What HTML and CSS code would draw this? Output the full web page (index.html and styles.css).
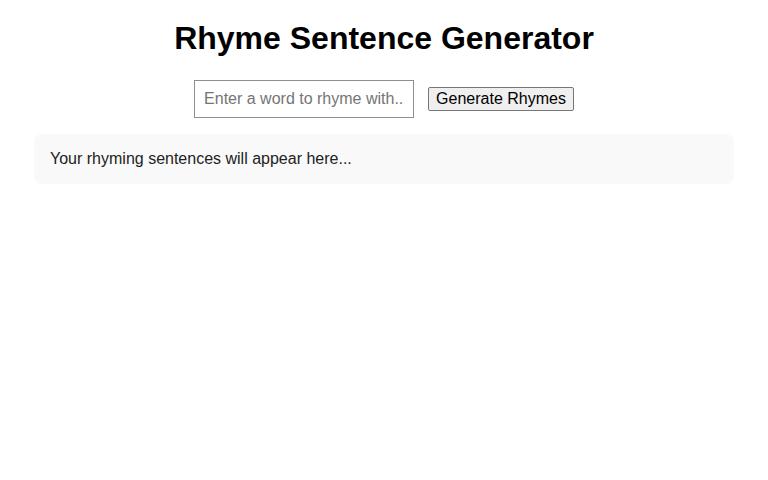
FILE: index.html
```html
<!DOCTYPE html>
<html lang="en">
<head>
    <meta charset="UTF-8">
    <meta name="viewport" content="width=device-width, initial-scale=1.0">
    <title>Rhyme Sentence Generator</title>
    <link rel="stylesheet" href="styles.css">
</head>
<body>
    <div class="container">
        <h1>Rhyme Sentence Generator</h1>

        <div class="controls">
            <input type="text" id="word" placeholder="Enter a word to rhyme with...">
            <button id="generateBtn">Generate Rhymes</button>
        </div>

        <div id="output" class="output">Your rhyming sentences will appear here...</div>
    </div>
</body>
</html>
```

FILE: styles.css
```css
body {
    font-family: 'Liberation Sans', Arial, sans-serif;
    background-color: #fff;
    color: #000;
    margin: 0;
    padding: 0;
}

.container {
    max-width: 700px;
    margin: 0 auto;
    padding-top: 20px;
}

h1 {
    margin: 0 0 23px;
    font-size: 32px;
    line-height: 37px;
    text-align: center;
}

.controls {
    display: flex;
    justify-content: center;
    align-items: center;
    gap: 14px;
    margin-bottom: 16px;
}

input {
    width: 220px;
    height: 38px;
    box-sizing: border-box;
    padding: 0 9px;
    border: 1px solid #8f8f8f;
    border-radius: 0;
    font-family: inherit;
    font-size: 16px;
    color: #000;
}

input::placeholder {
    color: #757575;
}

button {
    height: 24px;
    box-sizing: border-box;
    padding: 0 7px;
    background-color: #efefef;
    border: 1px solid #767676;
    border-radius: 2px;
    font-family: inherit;
    font-size: 16px;
    color: #000;
}

.output {
    background-color: #f9f9f9;
    border-radius: 8px;
    padding: 16px;
    font-size: 16px;
    line-height: 18px;
    color: #222;
}
```
